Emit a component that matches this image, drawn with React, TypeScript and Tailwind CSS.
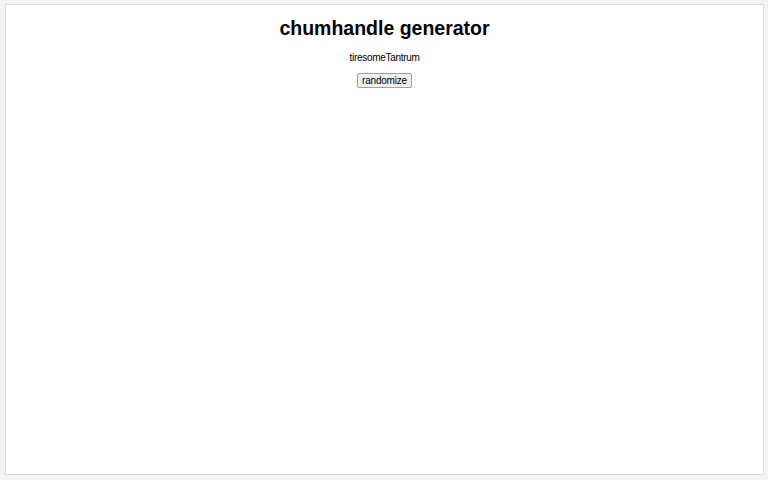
import React, { useState } from "react";

const first = ["tiresome", "grumpy", "carcino", "gallows", "twin", "arsenic", "terminally"];
const second = ["Tantrum", "Geneticist", "Calibrator", "Armageddons", "Aquarium", "Capricious"];

export default function App() {
  const [handle, setHandle] = useState("tiresomeTantrum");

  const randomize = () => {
    const a = first[Math.floor(Math.random() * first.length)];
    const b = second[Math.floor(Math.random() * second.length)];
    setHandle(a + b);
  };

  return (
    <div className="h-[480px] bg-[#f3f3f3] pt-[4px] pb-[5px] pl-[5px] pr-[4px] font-['Liberation_Sans',Arial,sans-serif] text-black">
      <div className="h-full border border-[#dcdcdc] bg-white flex flex-col items-center pt-[9px]">
        <h1 className="text-[19.5px] leading-[28px] font-bold">chumhandle generator</h1>
        <p className="mt-[10px] text-[10px] leading-[12px] tracking-[-0.3px]">{handle}</p>
        <button
          type="button"
          onClick={randomize}
          className="mt-[9px] h-[15px] px-[4px] text-[10px] leading-[13px] bg-[#efefef] border border-[#a0a0a0] rounded-[2px] tracking-[-0.2px]"
        >
          randomize
        </button>
      </div>
    </div>
  );
}
